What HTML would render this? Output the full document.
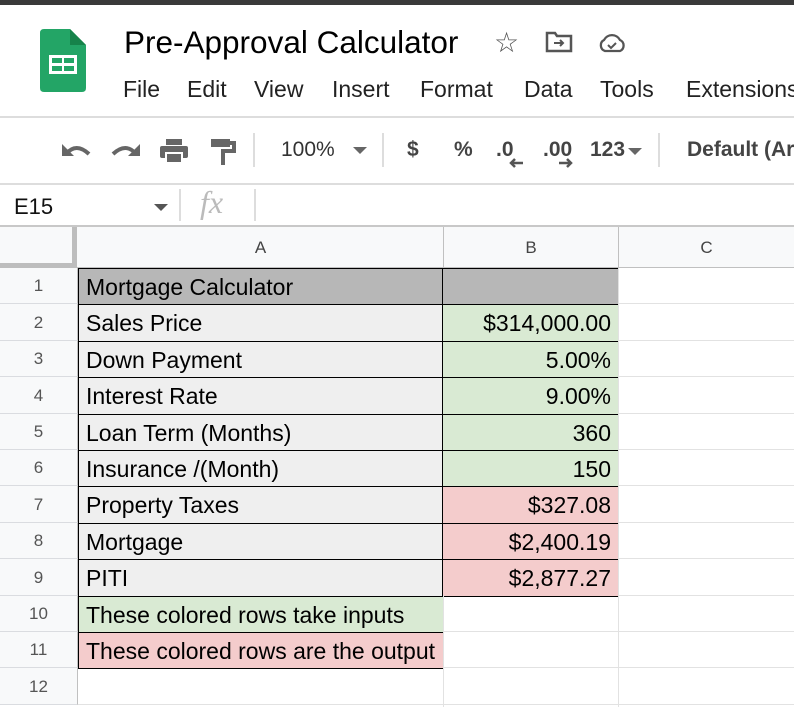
<!DOCTYPE html><html><head><style>
*{margin:0;padding:0;box-sizing:border-box}
body{width:794px;height:707px;overflow:hidden;background:#fff;font-family:"Liberation Sans",Arial,sans-serif;position:relative;color:#202124}
.a{position:absolute;white-space:nowrap}
.c{position:absolute;font-size:23px;line-height:36px;padding:0 7px;white-space:nowrap;overflow:hidden;color:#000}
.r{text-align:right}
.rh{position:absolute;left:0;width:78px;text-align:center;font-size:17px;color:#555;background:#f8f9fa;border-bottom:1px solid #dadce0;border-right:1px solid #c0c0c0}
.tb{position:absolute;top:138px;font-size:21px;color:#444;font-weight:bold;white-space:nowrap}
.m{position:absolute;top:76px;font-size:23px;color:#222}
</style></head><body>
<div class="a" style="left:0;top:0;width:794px;height:5px;background:#3a3a3a"></div>
<svg class="a" style="left:40px;top:29px" width="46" height="63" viewBox="0 0 46 63"><path d="M4 0H30L46 16V59Q46 63 42 63H4Q0 63 0 59V4Q0 0 4 0Z" fill="#23a566"/><path d="M30 0V16H46Z" fill="#16834a"/><rect x="9" y="26" width="28" height="19" fill="#fff"/><rect x="12" y="29" width="10" height="5" fill="#23a566"/><rect x="24" y="29" width="10" height="5" fill="#23a566"/><rect x="12" y="37" width="10" height="5" fill="#23a566"/><rect x="24" y="37" width="10" height="5" fill="#23a566"/></svg>
<div class="a" style="left:124px;top:24px;font-size:31.5px;color:#000">Pre-Approval Calculator</div>
<div class="a" style="left:494px;top:26px;font-size:28px;color:#555">☆</div>
<svg class="a" style="left:545px;top:31px" width="28" height="22" viewBox="0 0 28 22"><path d="M2 2H10L12 5H26V20H2Z" fill="none" stroke="#555" stroke-width="2.5"/><path d="M9 12H18M15 9L18 12L15 15" fill="none" stroke="#555" stroke-width="2"/></svg>
<svg class="a" style="left:597px;top:32px" width="30" height="22" viewBox="0 0 30 22"><path d="M8 19H23A6 6 0 0 0 23 8A9 9 0 0 0 7 8A6 6 0 0 0 8 19Z" fill="none" stroke="#555" stroke-width="2.3"/><path d="M11 13L14 16L19 11" fill="none" stroke="#555" stroke-width="2"/></svg>
<div class="m" style="left:123px">File</div>
<div class="m" style="left:187px">Edit</div>
<div class="m" style="left:254px">View</div>
<div class="m" style="left:332px">Insert</div>
<div class="m" style="left:420px">Format</div>
<div class="m" style="left:524px">Data</div>
<div class="m" style="left:600px">Tools</div>
<div class="m" style="left:686px">Extensions</div>
<div class="a" style="left:0;top:116px;width:794px;height:2px;background:#ddd"></div>
<svg class="a" style="left:60px;top:140px" width="32" height="20" viewBox="0 0 32 20"><path d="M6 14Q16 2 29 14" fill="none" stroke="#666" stroke-width="4"/><path d="M2 4V16H14Z" fill="#666"/></svg>
<svg class="a" style="left:110px;top:140px" width="32" height="20" viewBox="0 0 32 20"><path d="M26 14Q16 2 3 14" fill="none" stroke="#666" stroke-width="4"/><path d="M30 4V16H18Z" fill="#666"/></svg>
<svg class="a" style="left:159px;top:138px" width="30" height="26" viewBox="0 0 30 26"><rect x="7" y="1" width="16" height="6" fill="#666"/><rect x="1" y="8" width="28" height="12" rx="2" fill="#666"/><rect x="7" y="15" width="16" height="10" fill="#666" stroke="#fff" stroke-width="2"/></svg>
<svg class="a" style="left:210px;top:138px" width="26" height="28" viewBox="0 0 26 28"><rect x="1" y="1" width="19" height="8" fill="#666"/><path d="M20 5H24V13H13V27" fill="none" stroke="#666" stroke-width="4"/></svg>
<div class="a" style="left:253px;top:133px;width:2px;height:34px;background:#ddd"></div>
<div class="tb" style="left:281px;color:#333;font-weight:normal">100%</div>
<div class="a" style="left:353px;top:147px;border-left:7px solid transparent;border-right:7px solid transparent;border-top:7px solid #666"></div>
<div class="a" style="left:382px;top:133px;width:2px;height:34px;background:#ddd"></div>
<div class="tb" style="left:407px">$</div>
<div class="tb" style="left:454px">%</div>
<div class="tb" style="left:496px">.0</div>
<svg class="a" style="left:508px;top:158px" width="16" height="10" viewBox="0 0 16 10"><path d="M15 5H3M7 1L3 5L7 9" fill="none" stroke="#555" stroke-width="2.5"/></svg>
<div class="tb" style="left:543px">.00</div>
<svg class="a" style="left:558px;top:158px" width="16" height="10" viewBox="0 0 16 10"><path d="M1 5H13M9 1L13 5L9 9" fill="none" stroke="#555" stroke-width="2.5"/></svg>
<div class="tb" style="left:590px">123</div>
<div class="a" style="left:628px;top:148px;border-left:7px solid transparent;border-right:7px solid transparent;border-top:7px solid #666"></div>
<div class="a" style="left:658px;top:133px;width:2px;height:34px;background:#ddd"></div>
<div class="tb" style="left:687px">Default (Arial)</div>
<div class="a" style="left:0;top:183px;width:794px;height:2px;background:#ddd"></div>
<div class="a" style="left:14px;top:194px;font-size:22px;color:#111">E15</div>
<div class="a" style="left:154px;top:204px;border-left:7px solid transparent;border-right:7px solid transparent;border-top:7px solid #555"></div>
<div class="a" style="left:179px;top:189px;width:2px;height:32px;background:#ddd"></div>
<div class="a" style="left:200px;top:184px;font-size:32px;color:#bbb;font-family:'Liberation Serif',serif;font-style:italic">fx</div>
<div class="a" style="left:254px;top:189px;width:2px;height:32px;background:#ddd"></div>
<div class="a" style="left:0;top:225px;width:794px;height:2px;background:#c8c8c8"></div>
<div class="a" style="left:0;top:227px;width:794px;height:41px;background:#f8f9fa;border-bottom:1px solid #c0c0c0"></div>
<div class="a" style="left:0;top:227px;background:#f8f9fa;border-right:5px solid #bdbdbd;border-bottom:5px solid #bdbdbd;width:77px;height:41px"></div>
<div class="a" style="left:78px;top:227px;width:366px;height:41px;border-right:1px solid #c0c0c0;text-align:center;line-height:41px;font-size:17px;color:#444">A</div>
<div class="a" style="left:444px;top:227px;width:175px;height:41px;border-right:1px solid #c0c0c0;text-align:center;line-height:41px;font-size:17px;color:#444">B</div>
<div class="a" style="left:619px;top:227px;width:175px;height:41px;text-align:center;line-height:41px;font-size:17px;color:#444">C</div>
<div id="g"></div>
<script>
var T=268,H=36.4,g='';
var A=["Mortgage Calculator","Sales Price","Down Payment","Interest Rate","Loan Term (Months)","Insurance /(Month)","Property Taxes","Mortgage","PITI","These colored rows take inputs","These colored rows are the output",""];
var B=["","$314,000.00","5.00%","9.00%","360","150","$327.08","$2,400.19","$2,877.27","","",""];
for(var i=0;i<12;i++){var t=Math.round(T+i*H),h=Math.round(T+(i+1)*H)-t;
g+='<div class="rh" style="top:'+t+'px;height:'+h+'px;line-height:'+h+'px">'+(i+1)+'</div>';
g+='<div class="a" style="left:78px;top:'+(t+h-1)+'px;width:716px;height:1px;background:#e2e2e2"></div>';
var ca=i==0?'#b7b7b7':(i<9?'#efefef':(i==9?'#d9ead3':(i==10?'#f4cccc':'transparent')));
var cb=i==0?'#b7b7b7':(i<6?'#d9ead3':(i<9?'#f4cccc':'transparent'));
var bd='border:1.5px solid #000;';
g+='<div class="c" style="left:78px;top:'+t+'px;width:366px;height:'+(h+1)+'px;background:'+ca+';'+(i<11?bd:'')+'line-height:'+h+'px">'+A[i]+'</div>';
g+='<div class="c r" style="left:442px;top:'+t+'px;width:177px;height:'+(h+1)+'px;background:'+cb+';'+(i<9?bd:'')+'line-height:'+h+'px">'+B[i]+'</div>';}
g+='<div class="a" style="left:443px;top:595px;width:1px;height:112px;background:#e2e2e2"></div>';
g+='<div class="a" style="left:618px;top:268px;width:1px;height:439px;background:#e2e2e2"></div>';
document.getElementById('g').innerHTML=g;
</script>
</body></html>
